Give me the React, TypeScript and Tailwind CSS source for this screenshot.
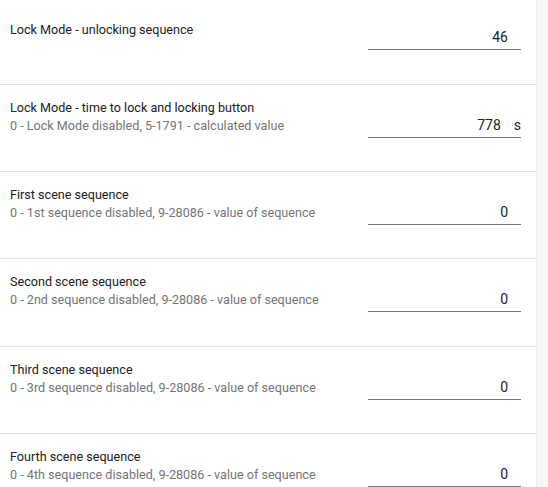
import React from "react";

type Row = {
  title: string;
  hint?: string;
  value: string;
  unit?: string;
};

const rows: Row[] = [
  { title: "Lock Mode - unlocking sequence", value: "46" },
  {
    title: "Lock Mode - time to lock and locking button",
    hint: "0 - Lock Mode disabled, 5-1791 - calculated value",
    value: "778",
    unit: "s",
  },
  {
    title: "First scene sequence",
    hint: "0 - 1st sequence disabled, 9-28086 - value of sequence",
    value: "0",
  },
  {
    title: "Second scene sequence",
    hint: "0 - 2nd sequence disabled, 9-28086 - value of sequence",
    value: "0",
  },
  {
    title: "Third scene sequence",
    hint: "0 - 3rd sequence disabled, 9-28086 - value of sequence",
    value: "0",
  },
  {
    title: "Fourth scene sequence",
    hint: "0 - 4th sequence disabled, 9-28086 - value of sequence",
    value: "0",
  },
];

const heights = ["h-[85px]", "h-[87px]", "h-[87px]", "h-[88px]", "h-[87px]", "h-[87px]"];

function ParamRow({ row, index }: { row: Row; index: number }) {
  const first = index === 0;
  return (
    <div className={`flex shrink-0 border-b border-[#e0e0e0] pl-[10px] pr-[15px] ${heights[index]}`}>
      <div className={`flex-1 ${first ? "pt-[22px]" : "pt-[15px]"}`}>
        <div className="text-[12.6px] leading-4 text-[#212121]">{row.title}</div>
        {row.hint && (
          <div className="mt-[2px] text-[12.6px] leading-4 text-[#757575]">{row.hint}</div>
        )}
      </div>
      <div className={`w-[153px] ${first ? "pt-[28px]" : "pt-[31px]"}`}>
        <div className="flex h-[22px] items-center justify-end border-b border-[#757575] pb-[2px] pr-[13px] text-[14px] text-[#212121]">
          <span>{row.value}</span>
          {row.unit && <span className="ml-[13px] -mr-[13px]">{row.unit}</span>}
        </div>
      </div>
    </div>
  );
}

export default function App() {
  return (
    <div
      className="flex h-[487px] w-[548px] overflow-hidden bg-white"
      style={{ fontFamily: "Roboto, 'Noto Sans', sans-serif" }}
    >
      <div className="flex w-[536px] flex-col">
        {rows.map((r, i) => (
          <ParamRow key={r.title} row={r} index={i} />
        ))}
      </div>
      <div className="flex-1 border-l border-[#ececec] bg-[#f7f7f7]" />
    </div>
  );
}
